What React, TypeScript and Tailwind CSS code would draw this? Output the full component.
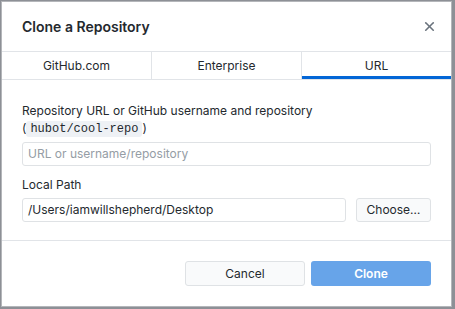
import { X } from "lucide-react";

const tabs = ["GitHub.com", "Enterprise", "URL"];

export default function App() {
  return (
    <div
      className="w-[455px] h-[309px] bg-[#8d9096] pl-[1px] pt-[1px] overflow-hidden"
      style={{ fontFamily: "Inter, 'Liberation Sans', sans-serif" }}
    >
      <div className="w-[451px] h-[306px] bg-white border border-[#b4b6ba] flex flex-col text-[#24292e]">
        <header className="h-[49px] flex items-center justify-between pl-[20px] pr-[14px]">
          <h1 className="text-[14px] font-semibold">Clone a Repository</h1>
          <X className="w-[15px] h-[15px] text-[#6a737d]" strokeWidth={2.6} />
        </header>

        <nav className="flex h-[29px] border-y border-[#e1e4e8]">
          {tabs.map((tab, i) => (
            <div
              key={tab}
              className={
                i === 2
                  ? "flex-1 flex items-center justify-center text-[12px] border-b-[3px] border-[#0366d6] pt-[3px]"
                  : "flex-1 flex items-center justify-center text-[12px] border-r border-[#e1e4e8]"
              }
            >
              {tab}
            </div>
          ))}
        </nav>

        <section className="flex-1 px-[20px] pt-[21px] text-[12px]">
          <p className="leading-[17px] pt-[1px]">Repository URL or GitHub username and repository</p>
          <p className="leading-[17px]">
            (
            <code
              className="bg-[#eef1f5] rounded-[3px] px-[4px] py-[1px] text-[12px]"
              style={{ fontFamily: "'Liberation Mono', 'DejaVu Sans Mono', monospace" }}
            >
              hubot/cool-repo
            </code>
            )
          </p>
          <div className="mt-[4px] h-[24px] border border-[#dfe2e5] rounded-[3px] flex items-center px-[5px] text-[#959da5]">
            URL or username/repository
          </div>
          <p className="leading-[17px] mt-[10px]">Local Path</p>
          <div className="flex gap-[10px] mt-[5px]">
            <div className="flex-1 h-[24px] border border-[#dfe2e5] rounded-[3px] flex items-center px-[5px]">
              /Users/iamwillshepherd/Desktop
            </div>
            <button className="w-[75px] h-[24px] border border-[#dfe2e5] rounded-[3px] bg-[#f9fafb] text-[12px]">
              Choose…
            </button>
          </div>
        </section>

        <footer className="h-[66px] border-t border-[#e1e4e8] flex justify-end items-start gap-[6px] pt-[20px] pr-[20px]">
          <button className="w-[120px] h-[25px] border border-[#dfe2e5] rounded-[3px] bg-[#f9fafb] text-[12px]">
            Cancel
          </button>
          <button className="w-[120px] h-[25px] rounded-[3px] bg-[#67a4e9] text-white text-[12px] font-semibold">
            Clone
          </button>
        </footer>
      </div>
    </div>
  );
}
